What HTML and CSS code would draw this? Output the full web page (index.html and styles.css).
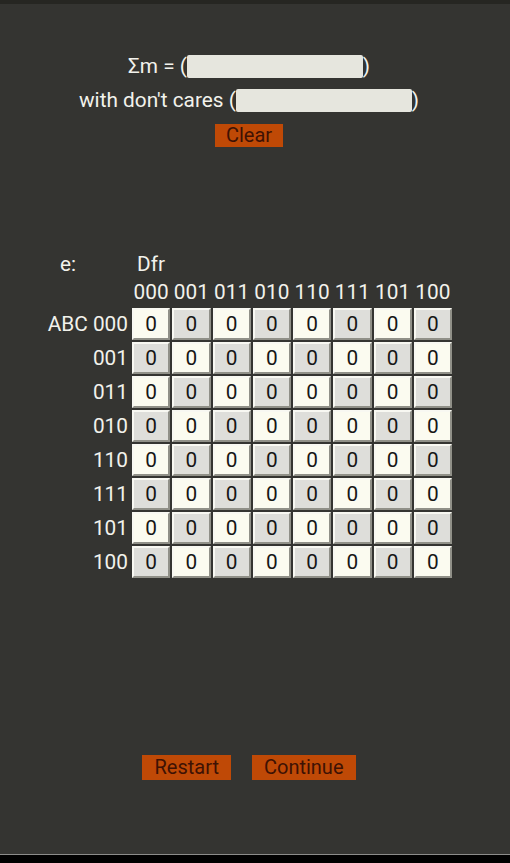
FILE: index.html
```html
<!DOCTYPE html>
<html>
<head>
<meta charset="utf-8">
<link rel="stylesheet" href="styles.css">
</head>
<body>
<div class="topbar"></div>
<main class="page">
  <section class="formula">
    <div class="line line-sum">Σm = (<span class="field"></span>)</div>
    <div class="line line-dc">with don't cares (<span class="field"></span>)</div>
    <div class="line line-btn"><button class="btn">Clear</button></div>
  </section>
  <section class="kmap" id="kmap">
    <div class="var-row">e:</div>
    <div class="var-col">Dfr</div>
    <div class="corner"></div>
  </section>
  <section class="actions">
    <button class="btn btn-lg">Restart</button>
    <button class="btn btn-lg">Continue</button>
  </section>
</main>
<div class="footer"></div>
<script>
  (function () {
    var codes = ["000", "001", "011", "010", "110", "111", "101", "100"];
    var map = document.getElementById("kmap");
    codes.forEach(function (c) {
      var h = document.createElement("div");
      h.className = "col-head";
      h.textContent = c;
      map.appendChild(h);
    });
    codes.forEach(function (r, ri) {
      var l = document.createElement("div");
      l.className = "row-head";
      l.textContent = (ri === 0 ? "ABC " : "") + r;
      map.appendChild(l);
      codes.forEach(function (c, ci) {
        var cell = document.createElement("div");
        cell.className = "cell " + ((ri + ci) % 2 === 0 ? "cell-light" : "cell-dark");
        cell.textContent = "0";
        map.appendChild(cell);
      });
    });
  })();
</script>
</body>
</html>
```

FILE: styles.css
```css
html, body {
  margin: 0;
  padding: 0;
}
body {
  width: 510px;
  height: 863px;
  overflow: hidden;
  background: #343431;
  font-family: Roboto, "Noto Sans", sans-serif;
  font-size: 20.8px;
  color: #f2f2ec;
}
.topbar {
  height: 4px;
  background: #262622;
}
.page {
  height: 850px;
  width: 498px;
  box-sizing: border-box;
  padding-top: 51px;
}
.formula {
  display: flex;
  flex-direction: column;
  align-items: center;
}
.line {
  display: flex;
  align-items: center;
  height: 23px;
  line-height: 23px;
  white-space: pre;
}
.line-dc { margin-top: 11px; }
.line-btn { margin-top: 12px; }
.field {
  display: inline-block;
  width: 176px;
  height: 23px;
  background: #e6e6de;
  border-radius: 2px;
}
.btn {
  font-family: Roboto, "Noto Sans", sans-serif;
  font-size: 20px;
  color: #3e1204;
  background: #bf4906;
  border: none;
  border-radius: 0;
  margin: 0;
  padding: 0 11px;
  height: 23px;
  line-height: 23px;
}
.btn-lg {
  height: 25px;
  line-height: 25px;
  padding: 0 12px;
}
.kmap {
  margin-top: 105px;
  margin-left: 44px;
  display: grid;
  grid-template-columns: 86px repeat(8, 38.25px);
  grid-template-rows: 24px 28px repeat(8, 32px);
  column-gap: 2px;
  row-gap: 2px;
}
.var-row {
  grid-column: 1;
  grid-row: 1;
  padding-left: 16px;
  line-height: 24px;
}
.var-col {
  grid-column: 2 / span 8;
  grid-row: 1;
  padding-left: 5px;
  line-height: 24px;
}
.corner {
  grid-column: 1;
  grid-row: 2;
}
.col-head {
  text-align: center;
  line-height: 28px;
  white-space: nowrap;
}
.row-head {
  text-align: right;
  padding-right: 2px;
  line-height: 32px;
  white-space: nowrap;
}
.cell {
  box-sizing: border-box;
  border-style: solid;
  border-width: 2px;
  border-color: #f8f8f2 #909088 #909088 #f8f8f2;
  color: #161616;
  text-align: center;
  line-height: 28px;
}
.cell-light { background: #fbfbf0; }
.cell-dark { background: #dededa; }
.actions {
  margin-top: 177px;
  display: flex;
  justify-content: center;
  gap: 21px;
}
.footer {
  height: 9px;
  background: #000;
  border-top: 1px solid #8c8c8a;
  box-sizing: border-box;
}
```
